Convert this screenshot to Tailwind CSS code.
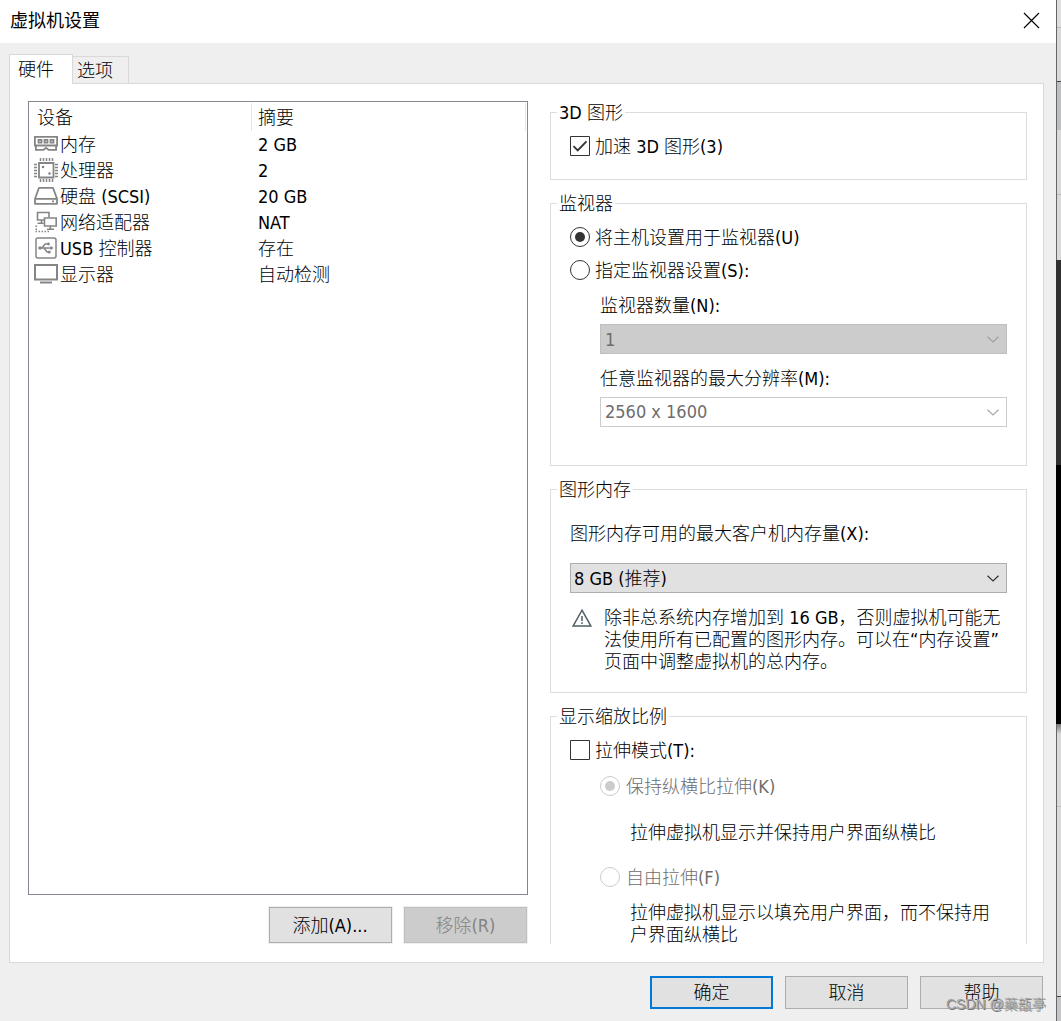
<!DOCTYPE html>
<html lang="zh-CN">
<head>
    <meta charset="UTF-8" />
    <meta name="viewport" content="width=device-width, initial-scale=1.0"/>
    <title>虚拟机设置</title>
    <script src="https://cdn.jsdelivr.net/npm/@tailwindcss/browser@4"></script>
</head>
<body class="flex h-[1021px] w-[1061px] overflow-hidden bg-[#d9d9d9] font-['DejaVu_Sans_Condensed','Noto_Sans_CJK_SC',sans-serif] text-[18px] leading-5 font-light text-black whitespace-nowrap">

    <div class="relative flex h-full w-[1056px] flex-col bg-[#efefef]">
        <!-- Title bar -->
        <header class="flex h-[43px] items-center justify-between bg-white pr-4 pl-[10px]">
            <h1 class="pb-[2px] text-[18px] font-normal">虚拟机设置</h1>
            <svg class="mb-[2px] size-[17px]" viewBox="0 0 17 17" fill="none" stroke="#000" stroke-width="1.2"><path d="M1 1l15 15M16 1L1 16"/></svg>
        </header>

        <!-- Tabs -->
        <nav class="mt-[11px] ml-[9px] flex h-[29px] items-end">
            <div class="z-10 -mb-px flex h-[30px] w-[64px] justify-start border border-b-0 border-[#d9d9d9] bg-white pt-[5px] pl-[8px]">硬件</div>
            <div class="flex h-[27px] w-[56px] border border-b-0 border-l-0 border-[#d9d9d9] pt-[4px] pl-[4px]">选项</div>
        </nav>

        <!-- Tab panel -->
        <main class="ml-[9px] flex h-[880px] w-[1035px] border border-[#d9d9d9] bg-white pl-[18px]">
            <section class="w-[500px] pt-[17px]">
                <div class="h-[794px] border border-[#828790] pt-px">
                    <div class="flex h-[28px]">
                        <div class="w-[223px] border-r border-[#e5e5e5] pt-[5px] pl-[8px]">设备</div>
                        <div class="w-[274px] border-r border-[#e5e5e5] pt-[5px] pl-[6px]">摘要</div>
                    </div>
                    <div class="grid auto-rows-[26px] grid-cols-[26px_198px_1fr] items-center pl-[5px] [&>span]:mt-[2px]">
                        <svg class="size-[24px]" viewBox="0 0 24 24" fill="none" stroke="#858585" stroke-width="1.8"><path d="M.9 4.900h22.200v8.600H.9zM1.900 13.500v4.300h7.600l2.500-2 2.500 2h7.600v-4.300"/><path d="M4.500 7.800h3v2.800h-3zM10.500 7.800h3v2.800h-3zM16.500 7.800h3v2.800h-3z"/></svg>
                        <span>内存</span><span>2 GB</span>

                        <svg class="size-[24px]" viewBox="0 0 24 24" fill="none" stroke="#858585" stroke-width="1.8"><path d="M5 5h14.500v14.500H5z"/><path d="M6.500 0v3M9.500 0v3M12.500 0v3M15.500 0v3M18.500 0v3M6.500 21v3M9.500 21v3M12.500 21v3M15.500 21v3M18.500 21v3M0 6.500h3M0 9.500h3M0 12.500h3M0 15.500h3M0 18.500h3M21 6.500h3M21 9.500h3M21 12.500h3M21 15.500h3M21 18.500h3" stroke-width="1.500"/><g fill="#858585" stroke="none"><circle cx="9" cy="9" r="1.300"/><circle cx="15.500" cy="15.500" r="1.300"/></g></svg>
                        <span>处理器</span><span>2</span>

                        <svg class="size-[24px]" viewBox="0 0 24 24" fill="none" stroke="#858585" stroke-width="1.800" stroke-linejoin="round"><path d="M5 3.800h14l4 11v5H1v-5zM1 14.800h22"/><path d="M18 17.300h2"/></svg>
                        <span>硬盘 (SCSI)</span><span>20 GB</span>

                        <svg class="size-[24px]" viewBox="0 0 24 24" fill="none" stroke="#858585" stroke-width="1.600"><path d="M10 10H3.500V2.500H15V7.500"/><path d="M10.500 8H22.200v8H10.500zM16.300 16v3M13 19.300h7M7.500 10v3M3.500 13.200h6"/><path d="M2.200 15.500v5M1.500 21.500h14" stroke-dasharray="1.500 1.500"/></svg>
                        <span>网络适配器</span><span>NAT</span>

                        <svg class="size-[24px]" viewBox="0 0 24 24" fill="none" stroke="#858585" stroke-width="1.500"><rect x="2" y="2" width="20" height="20" rx="2"/><path d="M5.500 12H18M8 12l3-4h3M10 12l3 4h2"/><g fill="#858585" stroke="none"><circle cx="6" cy="12" r="1.800"/><path d="M16.500 9.800l3 2.200-3 2.200z"/><circle cx="14.500" cy="8" r="1.400"/><path d="M14 14.800h2.600v2.600H14z"/></g></svg>
                        <span>USB 控制器</span><span>存在</span>

                        <svg class="size-[24px]" viewBox="0 0 24 24" fill="none" stroke="#858585" stroke-width="2"><path d="M1 3h22v14.500H1zM6 20.500h12"/></svg>
                        <span>显示器</span><span>自动检测</span>
                    </div>
                </div>
                <div class="mt-[11px] flex justify-end gap-[10px]">
                    <div class="h-[38px] w-[125px] border border-[#efefef]"><div class="flex size-full items-center justify-center border border-[#adadad] bg-[#e1e1e1] pt-px pr-px">添加(A)...</div></div>
                    <div class="h-[38px] w-[125px] border border-[#efefef]"><div class="flex size-full items-center justify-center border border-[#bfbfbf] bg-[#ccc] pt-px text-[#838383]">移除(R)</div></div>
                </div>
            </section>

            <section class="ml-[22px] flex w-[477px] flex-col gap-[14px] pt-[19px]">
                <fieldset class="h-[77px] border border-[#dcdcdc] pl-[19px]">
                    <legend class="-ml-[13px] h-[19px] px-[2px] leading-[19px]">3D 图形</legend>
                    <div class="mt-[14px] flex h-5 items-center gap-[5px]">
                        <svg class="size-5" viewBox="0 0 20 20" fill="none" stroke="#333"><path d="M.5.5h19v19H.5z"/><path d="M3.500 10.200l4.200 4.200 8.800-9" stroke-width="1.800"/></svg>
                        <span class="pt-[2px]">加速 3D 图形(3)</span>
                    </div>
                </fieldset>

                <fieldset class="h-[272px] border border-[#dcdcdc] pl-[19px]">
                    <legend class="-ml-[13px] h-[19px] px-[2px] leading-[19px]">监视器</legend>
                    <div class="mt-[14px] flex h-5 items-center gap-[5px]">
                        <svg class="size-5" viewBox="0 0 20 20"><circle cx="10" cy="10" r="9.500" fill="none" stroke="#333"/><circle cx="10" cy="10" r="5" fill="#333"/></svg>
                        <span class="pt-[2px]">将主机设置用于监视器(U)</span>
                    </div>
                    <div class="mt-[13px] flex h-5 items-center gap-[5px]">
                        <svg class="size-5" viewBox="0 0 20 20"><circle cx="10" cy="10" r="9.500" fill="none" stroke="#333"/></svg>
                        <span class="pt-[2px]">指定监视器设置(S):</span>
                    </div>
                    <div class="w-[437px] pl-[30px]">
                        <p class="mt-[16px]">监视器数量(N):</p>
                        <div class="mt-[8px] flex h-[30px] items-center justify-between border border-[#bfbfbf] bg-[#ccc] pr-[7px] pl-[4px] text-[#6d6d6d]"><span class="pt-[2px]">1</span>
                            <svg class="h-[7px] w-[12px]" viewBox="0 0 12 7" fill="none" stroke="#a0a0a0" stroke-width="1.200"><path d="M.5.800L6 6 11.500.800"/></svg>
                        </div>
                        <p class="mt-[15px]">任意监视器的最大分辨率(M):</p>
                        <div class="mt-[8px] flex h-[30px] items-center justify-between border border-[#ccc] bg-white pr-[7px] pl-[4px] text-[#6d6d6d]">2560 x 1600
                            <svg class="h-[7px] w-[12px]" viewBox="0 0 12 7" fill="none" stroke="#a8a8a8" stroke-width="1.200"><path d="M.5.800L6 6 11.500.800"/></svg>
                        </div>
                    </div>
                </fieldset>

                <fieldset class="h-[213px] border border-[#dcdcdc] pl-[19px]">
                    <legend class="-ml-[13px] h-[19px] px-[2px] leading-[19px]">图形内存</legend>
                    <p class="mt-[25px]">图形内存可用的最大客户机内存量(X):</p>
                    <div class="mt-[19px] flex h-[30px] w-[437px] items-center justify-between border border-[#adadad] bg-[#e1e1e1] pr-[7px] pl-[3px]"><span class="pt-[2px]">8 GB (推荐)</span>
                        <svg class="h-[7px] w-[12px]" viewBox="0 0 12 7" fill="none" stroke="#333" stroke-width="1.200"><path d="M.5.800L6 6 11.500.800"/></svg>
                    </div>
                    <div class="mt-[14px] flex leading-[22px]">
                        <svg class="mt-px mr-[12px] ml-[2px] size-[20px]" viewBox="0 0 20 20" fill="none" stroke="#4f5f68" stroke-width="1.500"><path d="M10 2.200L18.800 18H1.200z"/><path d="M10 8v5M10 14.300v1.700"/></svg>
                        <p>除非总系统内存增加到 16 GB，否则虚拟机可能无<br>法使用所有已配置的图形内存。可以在“内存设置”<br>页面中调整虚拟机的总内存。</p>
                    </div>
                </fieldset>

                <fieldset class="h-[237px] border border-b-0 border-[#dcdcdc] pl-[19px]">
                    <legend class="-ml-[13px] h-[19px] px-[2px] leading-[19px]">显示缩放比例</legend>
                    <div class="mt-[14px] flex h-5 items-center gap-[5px]">
                        <svg class="size-5" viewBox="0 0 20 20" fill="none" stroke="#333"><path d="M.5.5h19v19H.5z"/></svg>
                        <span class="pt-[2px]">拉伸模式(T):</span>
                    </div>
                    <div class="pl-[30px]">
                        <div class="mt-[16px] flex h-5 items-center gap-[6px] text-[#6d6d6d]">
                            <svg class="size-5" viewBox="0 0 20 20"><circle cx="10" cy="10" r="9.500" fill="none" stroke="#ccc"/><circle cx="10" cy="10" r="5" fill="#ccc"/></svg>
                            <span class="pt-[2px]">保持纵横比拉伸(K)</span>
                        </div>
                        <p class="mt-[26px] ml-[30px] leading-[22px]">拉伸虚拟机显示并保持用户界面纵横比</p>
                        <div class="mt-[23px] flex h-5 items-center gap-[6px] text-[#6d6d6d]">
                            <svg class="size-5" viewBox="0 0 20 20"><circle cx="10" cy="10" r="9.500" fill="none" stroke="#ccc"/></svg>
                            <span class="pt-[2px]">自由拉伸(F)</span>
                        </div>
                        <p class="mt-[15px] ml-[30px] leading-[22px]">拉伸虚拟机显示以填充用户界面，而不保持用<br>户界面纵横比</p>
                    </div>
                </fieldset>
            </section>
        </main>

        <!-- Dialog buttons -->
        <footer class="mt-[13px] mr-[13px] flex justify-end gap-[12px]">
            <div class="flex h-[33px] w-[123px] items-center justify-center border-2 border-[#0078d7] bg-[#e1e1e1]">确定</div>
            <div class="flex h-[33px] w-[123px] items-center justify-center border border-[#adadad] bg-[#e1e1e1]">取消</div>
            <div class="flex h-[33px] w-[123px] items-center justify-center border border-[#adadad] bg-[#e1e1e1]">帮助</div>
        </footer>

        <!-- Watermark -->
        <div class="absolute top-[994px] left-[946px] z-20 font-['Liberation_Sans','Noto_Sans_CJK_SC',sans-serif] text-[14px] text-[#a4a4a4] [text-shadow:1px_1px_0_#777]">CSDN @藥瓿亭</div>
    </div>

    <!-- Sliver of the window behind the dialog -->
    <aside class="flex w-[5px] flex-col border-l border-[#666]">
        <div class="h-[27px] bg-[#dedede]"></div>
        <div class="h-[54px] border-t border-[#bbb] bg-[#d9d9d9]"></div>
        <div class="h-[49px] border-t border-[#444] bg-[#bebfc1]"></div>
        <div class="h-[64px] bg-[#dadada]"></div>
        <div class="h-[66px] border-t border-[#bbb] bg-[#dadada]"></div>
        <div class="-ml-px h-[205px] bg-[#303030]"></div>
        <div class="-ml-px h-[259px] bg-black"></div>
        <div class="h-[10px] bg-linear-to-b from-[#777] to-[#dadada]"></div>
        <div class="h-[72px] bg-[#dadada]"></div>
        <div class="h-[190px] border-t border-[#c0c0c0] bg-[#dadada]"></div>
        <div class="h-[25px] border-t border-[#444] bg-[#c6c6c8]"></div>
    </aside>

</body>
</html>
